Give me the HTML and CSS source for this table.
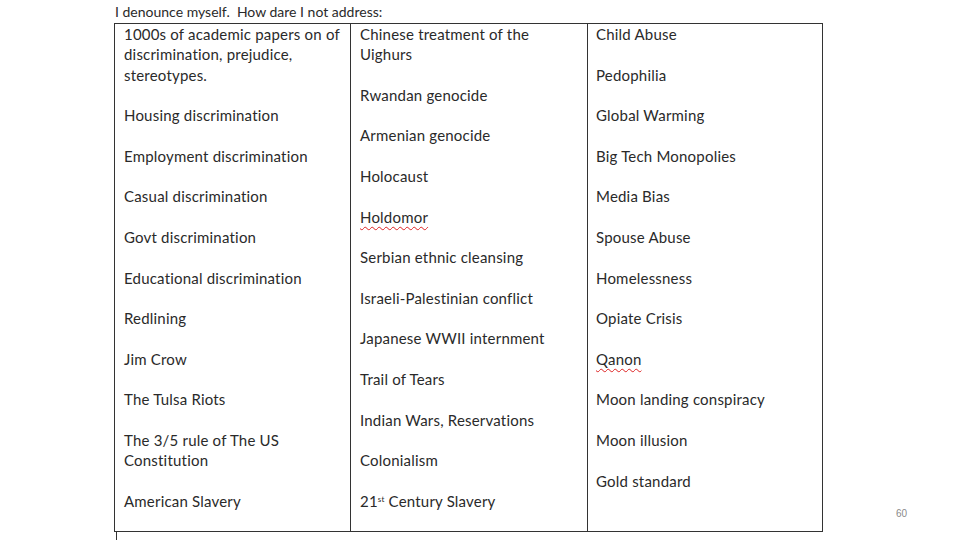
FILE: index.html
```html
<!DOCTYPE html>
<html>
<head>
<meta charset="utf-8">
<link rel="stylesheet" href="styles.css">
</head>
<body>
<div class="slide">
  <div class="title">I denounce myself.&nbsp; How dare I not address:</div>
  <table class="grid">
    <tr>
      <td class="c1">
        <p>1000s of academic papers on of<br>discrimination, prejudice,<br>stereotypes.</p>
        <p>Housing discrimination</p>
        <p>Employment discrimination</p>
        <p>Casual discrimination</p>
        <p>Govt discrimination</p>
        <p>Educational discrimination</p>
        <p>Redlining</p>
        <p>Jim Crow</p>
        <p>The Tulsa Riots</p>
        <p>The 3/5 rule of The US<br>Constitution</p>
        <p>American Slavery</p>
      </td>
      <td class="c2">
        <p>Chinese treatment of the<br>Uighurs</p>
        <p>Rwandan genocide</p>
        <p>Armenian genocide</p>
        <p>Holocaust</p>
        <p><span class="spell">Holdomor</span></p>
        <p>Serbian ethnic cleansing</p>
        <p>Israeli-Palestinian conflict</p>
        <p>Japanese WWII internment</p>
        <p>Trail of Tears</p>
        <p>Indian Wars, Reservations</p>
        <p>Colonialism</p>
        <p>21<sup>st</sup> Century Slavery</p>
      </td>
      <td class="c3">
        <p>Child Abuse</p>
        <p>Pedophilia</p>
        <p>Global Warming</p>
        <p>Big Tech Monopolies</p>
        <p>Media Bias</p>
        <p>Spouse Abuse</p>
        <p>Homelessness</p>
        <p>Opiate Crisis</p>
        <p><span class="spell">Qanon</span></p>
        <p>Moon landing conspiracy</p>
        <p>Moon illusion</p>
        <p>Gold standard</p>
      </td>
    </tr>
  </table>
  <div class="next"></div>
  <div class="pagenum">60</div>
</div>
</body>
</html>
```

FILE: styles.css
```css
html, body {
  margin: 0;
  padding: 0;
  background: #fff;
}
.slide {
  position: relative;
  width: 960px;
  height: 540px;
  overflow: hidden;
  font-family: Lato, "Liberation Sans", sans-serif;
  font-size: 14px;
  color: #2a2a2a;
  font-variant-ligatures: none;
}
.title {
  margin-left: 115px;
  padding-top: 2px;
  line-height: 20px;
  height: 21px;
}
.grid {
  margin-left: 114px;
  border-collapse: collapse;
  border: 1.5px solid #333;
  height: 508px;
  font-size: 15px;
  letter-spacing: 0.2px;
}
.grid td {
  vertical-align: top;
  border-left: 1.5px solid #333;
  padding: 0 6px 0 9px;
  height: 506px;
  box-sizing: border-box;
}
.grid td.c1 { width: 236px; border-left: none; }
.grid td.c2 { width: 237px; padding-left: 9px; }
.grid td.c3 { width: 235px; padding-left: 8px; }
.grid p {
  margin: 0 0 20.3px 0;
  line-height: 20.3px;
  white-space: nowrap;
}
.grid sup {
  font-size: 8px;
  line-height: 0;
  vertical-align: 5px;
}
.spell {
  text-decoration: underline wavy #d22;
  text-decoration-thickness: 1px;
  text-underline-offset: 3px;
  text-decoration-skip-ink: none;
}
.next {
  margin-left: 116px;
  height: 10px;
  border-left: 1.5px solid #333;
}
.pagenum {
  position: absolute;
  left: 896px;
  top: 508px;
  font-size: 10px;
  color: #8a8a8a;
  font-family: "Liberation Sans", sans-serif;
}
```
